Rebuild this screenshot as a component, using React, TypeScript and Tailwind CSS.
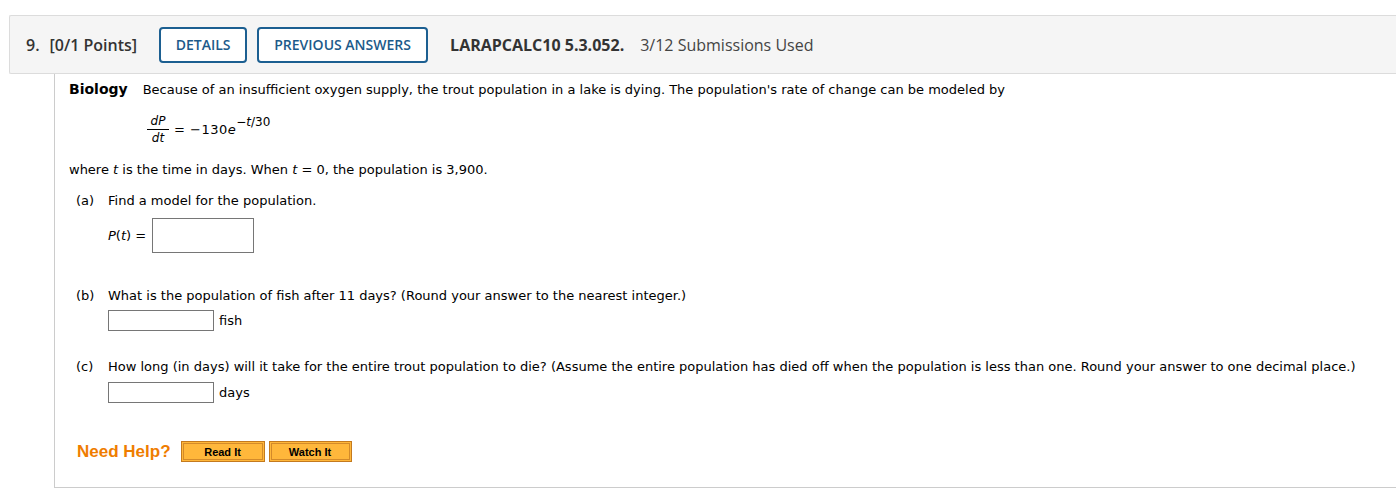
import React from "react";

export default function App() {
  const body = { fontFamily: "Verdana, 'DejaVu Sans', sans-serif" };
  return (
    <div className="w-[1396px] h-[504px] bg-white relative overflow-hidden">
      <div className="pt-[15px] pl-[9px]">
        <div
          className="h-[59px] bg-[#f5f5f5] border-y border-l border-[#dcdcdc] rounded-l-[2px] flex items-center pl-[16px] text-[#333333]"
          style={{ fontFamily: "'Open Sans', sans-serif" }}
        >
          <span className="text-[16px] font-semibold">9.</span>
          <span className="text-[16px] font-semibold ml-[10px]">[0/1 Points]</span>
          <div className="ml-[22px] h-[36px] w-[88px] border-2 border-[#1c5f91] rounded-[4px] flex items-center justify-center text-[14px] font-semibold text-[#1c5a8a] bg-white">
            DETAILS
          </div>
          <div className="ml-[10px] h-[36px] w-[171px] border-2 border-[#1c5f91] rounded-[4px] flex items-center justify-center text-[14px] font-semibold text-[#1c5a8a] bg-white">
            PREVIOUS ANSWERS
          </div>
          <span className="ml-[22px] text-[16px] font-bold text-[#333333]">LARAPCALC10 5.3.052.</span>
          <span className="ml-[16px] text-[16px] text-[#444444]">3/12 Submissions Used</span>
        </div>
        <div className="ml-[45px] border-l border-b border-[#cccccc] h-[414px] pl-[14px] pt-[6px] text-[13px] text-black" style={body}>
          <p className="leading-[18px]">
            <b className="text-[14px] mr-[15px]">Biology</b>
            Because of an insufficient oxygen supply, the trout population in a lake is dying. The population's rate of change can be modeled by
          </p>
          <div className="flex items-center ml-[78px] mt-[8px] h-[46px]">
            <div className="flex flex-col items-center text-[12px] italic">
              <span className="leading-[15px] px-[2px]">dP</span>
              <span className="h-px w-[22px] bg-black"></span>
              <span className="leading-[16px]">dt</span>
            </div>
            <span className="ml-[5px] text-[13px] tracking-[0.5px]">= −130<i>e</i></span>
            <span className="text-[12px] -translate-y-[8px]"><i>−t</i>/30</span>
          </div>
          <p className="mt-[8px] leading-[18px]">
            where <i>t</i> is the time in days. When <i>t</i> = 0, the population is 3,900.
          </p>
          <div className="mt-[13px] ml-[7px] flex leading-[18px]">
            <span className="w-[32px]">(a)</span>
            <span>Find a model for the population.</span>
          </div>
          <div className="ml-[39px] mt-[8px] flex items-center">
            <span className="text-[13px]"><i>P</i>(<i>t</i>) = </span>
            <div className="ml-[6px] w-[102px] h-[35px] border border-[#767676] bg-white"></div>
          </div>
          <div className="mt-[34px] ml-[7px] flex leading-[18px]">
            <span className="w-[32px]">(b)</span>
            <span>What is the population of fish after 11 days? (Round your answer to the nearest integer.)</span>
          </div>
          <div className="ml-[39px] mt-[5px] flex items-center">
            <div className="w-[106px] h-[21px] border border-[#767676] bg-white"></div>
            <span className="ml-[5px]">fish</span>
          </div>
          <div className="mt-[27px] ml-[7px] flex leading-[18px]">
            <span className="w-[32px]">(c)</span>
            <span>How long (in days) will it take for the entire trout population to die? (Assume the entire population has died off when the population is less than one. Round your answer to one decimal place.)</span>
          </div>
          <div className="ml-[39px] mt-[6px] flex items-center">
            <div className="w-[106px] h-[21px] border border-[#767676] bg-white"></div>
            <span className="ml-[5px]">days</span>
          </div>
          <div className="mt-[36px] ml-[8px] flex items-center" style={{ fontFamily: "Arial, 'Liberation Sans', sans-serif" }}>
            <span className="text-[17px] font-bold text-[#ef7d00]">Need Help?</span>
            <div className="ml-[10px] w-[84px] h-[21px] border border-[#c47a1e] bg-[#ffb73b] p-px">
              <div className="w-full h-full border border-[#d38a2a] flex items-center justify-center text-[11px] font-bold text-black">Read It</div>
            </div>
            <div className="ml-[4px] w-[83px] h-[21px] border border-[#c47a1e] bg-[#ffb73b] p-px">
              <div className="w-full h-full border border-[#d38a2a] flex items-center justify-center text-[11px] font-bold text-black">Watch It</div>
            </div>
          </div>
        </div>
      </div>
    </div>
  );
}
